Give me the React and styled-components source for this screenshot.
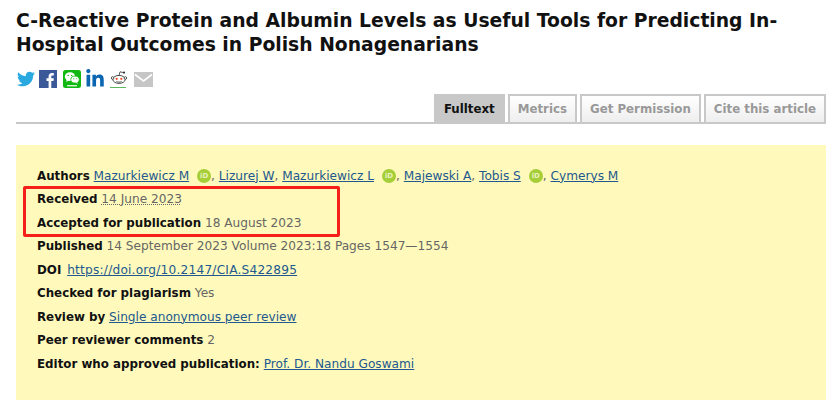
import React from 'react';
import styled, { createGlobalStyle } from 'styled-components';
import { FaTwitter, FaLinkedinIn } from 'react-icons/fa';

const Global = createGlobalStyle`
  html, body {
    margin: 0;
    background: #fff;
    font-family: "DejaVu Sans", Verdana, sans-serif;
    overflow: hidden;
  }
`;

const Page = styled.div`
  width: 839px;
  height: 410px;
  padding: 9px 13px 0 16px;
  box-sizing: border-box;
`;

const Title = styled.h1`
  margin: 0;
  font-size: 18.75px;
  line-height: 24px;
  font-weight: bold;
  color: #111;
  width: 800px;
`;

const Share = styled.div`
  display: flex;
  align-items: flex-start;
  margin-top: 13px;
  height: 18px;
  padding-left: 1px;
`;

const ShareIcon = styled.span`
  display: flex;
  align-items: center;
  justify-content: center;
  width: ${(p) => p.$w}px;
  height: 18px;
  margin-right: ${(p) => p.$gap}px;
  color: ${(p) => p.$color};
  font-size: ${(p) => p.$size}px;
`;

const TabBar = styled.div`
  display: flex;
  justify-content: flex-end;
  gap: 3px;
  margin-top: 6px;
  border-bottom: 2px solid #c8c8c8;
`;

const Tab = styled.div`
  height: 28px;
  padding: 0 8px;
  display: flex;
  align-items: center;
  font-size: 11.8px;
  font-weight: bold;
  box-sizing: border-box;
  color: ${(p) => (p.$active ? '#111' : '#999')};
  background: ${(p) => (p.$active ? '#c8c8c8' : 'linear-gradient(#fff, #eee)')};
  border: 2px solid #c8c8c8;
  border-bottom: 0;
`;

const Panel = styled.div`
  position: relative;
  margin-top: 21px;
  height: 255px;
  background: #fffabb;
  padding: 19.5px 21px 0;
  box-sizing: border-box;
  font-size: 12.15px;
`;

const Row = styled.div`
  height: 23.5px;
  line-height: 23.5px;
  color: #666;
  white-space: nowrap;
`;

const Label = styled.b`
  color: #111;
  font-size: 11.85px;
`;

const Link = styled.a`
  color: #22588f;
  text-decoration: underline;
`;

const DoiLink = styled(Link)`
  margin-left: 2px;
  letter-spacing: 0.22px;
`;

const Dotted = styled.span`
  color: #666;
  text-decoration: underline dotted;
`;

const Orcid = styled.span`
  display: inline-flex;
  align-items: center;
  justify-content: center;
  width: 14px;
  height: 14px;
  margin-left: 8px;
  border-radius: 50%;
  background: #a6ce39;
  color: #e6f2bd;
  font-size: 7px;
  font-weight: bold;
  line-height: 14px;
  vertical-align: 2px;
`;

const Highlight = styled.div`
  position: absolute;
  left: 7px;
  top: 41px;
  width: 317px;
  height: 51px;
  border: 3px solid #f5201a;
  border-radius: 2px;
  box-sizing: border-box;
`;

const FacebookIcon = () => (
  <svg width="18" height="18" viewBox="0 0 18 18">
    <rect width="18" height="18" fill="#3b5998" />
    <path d="M9.6 18v-7H7.5V8.3h2.1V6.5c0-2.2 1.3-3.4 3.3-3.4.9 0 1.7.1 1.9.1v2.4h-1.3c-1 0-1.2.5-1.2 1.2v1.5h2.5l-.3 2.7h-2.2v7z" fill="#fff" />
  </svg>
);

const WeChatIcon = () => (
  <svg width="18" height="18" viewBox="0 0 18 18">
    <rect width="18" height="18" rx="2.5" fill="#12b812" />
    <ellipse cx="7" cy="6.6" rx="5.2" ry="4.3" fill="#fff" />
    <path d="M3.8 9.5 3.2 12l2.6-1.5z" fill="#fff" />
    <ellipse cx="12" cy="9.6" rx="4.2" ry="3.5" fill="#fff" stroke="#12b812" strokeWidth=".8" />
    <path d="M14 12.3l1 1.5-2.5-1z" fill="#fff" />
    <circle cx="5.3" cy="5.4" r=".7" fill="#12b812" />
    <circle cx="8.6" cy="5.4" r=".7" fill="#12b812" />
    <circle cx="10.7" cy="8.8" r=".55" fill="#12b812" />
    <circle cx="13.3" cy="8.8" r=".55" fill="#12b812" />
    <rect x="4" y="15" width="10" height="1.4" fill="#d8f5d8" />
  </svg>
);

const RedditIcon = () => (
  <svg width="18" height="18" viewBox="0 0 18 18">
    <ellipse cx="9" cy="9.4" rx="6.2" ry="4" fill="#fff" stroke="#333" strokeWidth=".9" />
    <circle cx="2.6" cy="8" r="1.3" fill="#fff" stroke="#333" strokeWidth=".8" />
    <circle cx="15.4" cy="8" r="1.3" fill="#fff" stroke="#333" strokeWidth=".8" />
    <path d="M9 5.4 10 1.8l3 .7" fill="none" stroke="#333" strokeWidth=".8" />
    <circle cx="14" cy="2.6" r="1.1" fill="#333" />
    <circle cx="6.7" cy="8.8" r="1.1" fill="#f04a1d" />
    <circle cx="11.3" cy="8.8" r="1.1" fill="#f04a1d" />
    <path d="M6.4 11.4c1.4 1 3.8 1 5.2 0" fill="none" stroke="#333" strokeWidth=".8" />
    <rect y="17" width="16" height="1" fill="#5cb85c" />
  </svg>
);

const MailIcon = () => (
  <svg width="19" height="15" viewBox="0 0 19 15">
    <rect width="19" height="15" fill="#c6c6c6" />
    <path d="M1 2.5 9.5 9 18 2.5" fill="none" stroke="#fff" strokeWidth="1.6" />
  </svg>
);

export default function App() {
  return (
    <Page>
      <Global />
      <Title>C-Reactive Protein and Albumin Levels as Useful Tools for Predicting In-Hospital Outcomes in Polish Nonagenarians</Title>
      <Share>
        <ShareIcon $w={18} $gap={4} $color="#2aa9e0" $size={18}><FaTwitter /></ShareIcon>
        <ShareIcon $w={18} $gap={6}><FacebookIcon /></ShareIcon>
        <ShareIcon $w={18} $gap={5}><WeChatIcon /></ShareIcon>
        <ShareIcon $w={18} $gap={6} $color="#0a66b0" $size={20}><FaLinkedinIn /></ShareIcon>
        <ShareIcon $w={18} $gap={6}><RedditIcon /></ShareIcon>
        <ShareIcon $w={19} $gap={0}><MailIcon /></ShareIcon>
      </Share>
      <TabBar>
        <Tab $active>Fulltext</Tab>
        <Tab>Metrics</Tab>
        <Tab>Get Permission</Tab>
        <Tab>Cite this article</Tab>
      </TabBar>
      <Panel>
        <Highlight />
        <Row>
          <Label>Authors</Label> <Link>Mazurkiewicz M</Link><Orcid>iD</Orcid>, <Link>Lizurej W</Link>, <Link>Mazurkiewicz L</Link><Orcid>iD</Orcid>, <Link>Majewski A</Link>, <Link>Tobis S</Link><Orcid>iD</Orcid>, <Link>Cymerys M</Link>
        </Row>
        <Row><Label>Received</Label> <Dotted>14 June 2023</Dotted></Row>
        <Row><Label>Accepted for publication</Label> 18 August 2023</Row>
        <Row><Label>Published</Label> 14 September 2023 Volume 2023:18 Pages 1547—1554</Row>
        <Row><Label>DOI</Label> <DoiLink>https://doi.org/10.2147/CIA.S422895</DoiLink></Row>
        <Row><Label>Checked for plagiarism</Label> Yes</Row>
        <Row><Label>Review by</Label> <Link>Single anonymous peer review</Link></Row>
        <Row><Label>Peer reviewer comments</Label> 2</Row>
        <Row><Label>Editor who approved publication:</Label> <Link>Prof. Dr. Nandu Goswami</Link></Row>
      </Panel>
    </Page>
  );
}
